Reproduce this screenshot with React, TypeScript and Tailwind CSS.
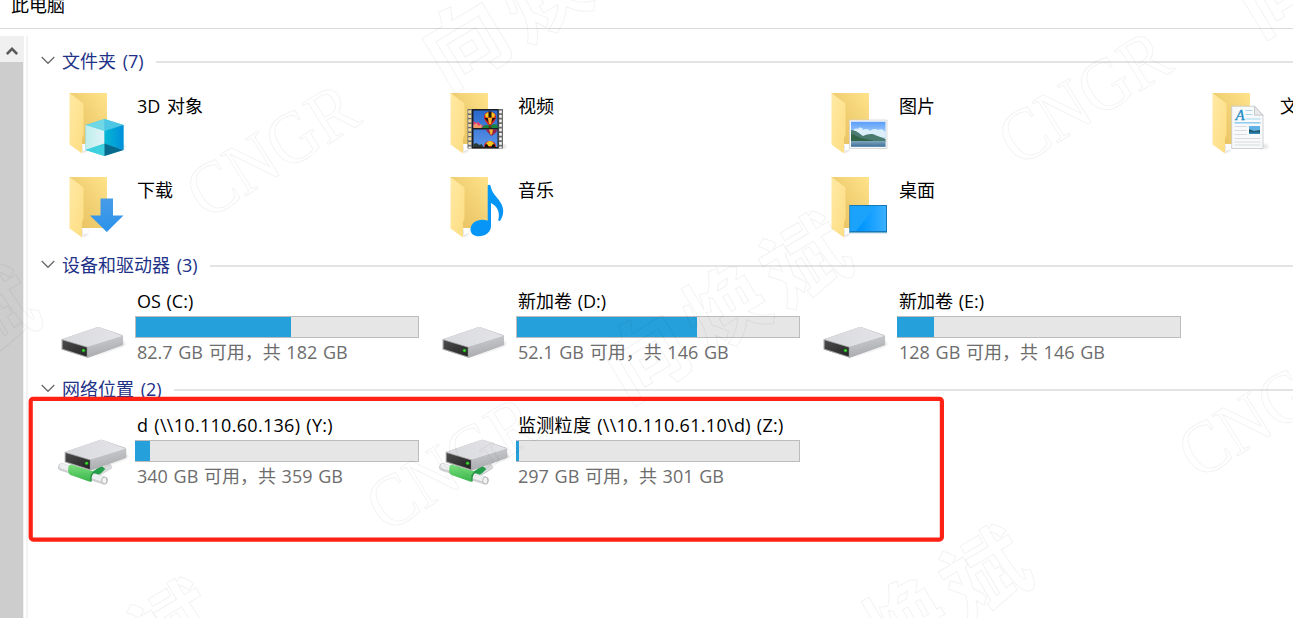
import React from 'react';

interface Drive {
  name: string;
  detail: string;
  used: number;
  network?: boolean;
  flush?: boolean;
}

interface Folder {
  name: string;
  art: React.FC;
  shadow?: boolean;
}

const CubeArt: React.FC = () => (
  <g transform="translate(-1 0)">
    <path d="M41.5 29 22.5 35v25l19 6 19-6V35z" fill="#52c8de" />
    <path d="m41.5 29-19 6 19 6z" fill="#6fd8e4" />
    <path d="m41.5 29 19 6-19 6z" fill="#4cc6e4" />
    <path d="m22.5 35 19 6v12.5l-19 6.5z" fill="url(#cubeLeft)" />
    <path d="m60.5 35-19 6v12.5l19 6.5z" fill="url(#cubeRight)" />
    <path d="m22.5 60 19-6.5V66z" fill="#3dd0de" />
    <path d="m60.5 60-19-6.5V66z" fill="#066a8e" />
  </g>
);

const DownloadArt: React.FC = () => (
  <path d="M36.5 24.5H49v17h10.5L42.8 58 26 41.5h10.5z" fill="url(#arrowBlue)" />
);

const Balloon: React.FC = () => (
  <>
    <path d="M39 27c0-7 12-7 12 0 0 3-3 6-4.5 8h-3C42 33 39 30 39 27" fill="#d81e1e" />
    <path d="M40 25c1.5-4 8.5-4 10 0l-1 2.5h-8z" fill="#f4c71c" />
    <path d="M39.5 28h3l1.5 5zM47.5 28h3L46 33zM43.5 21.5h3v6h-3z" fill="#1b1414" />
    <path d="M43 28h4l-1 6h-2z" fill="#f4b41c" />
    <path d="M43.7 35.5h2.6V38h-2.6z" fill="#5c3310" />
  </>
);

const VideoArt: React.FC = () => (
  <>
    <path d="M22.5 19H58v39.5H22.5z" fill="#6b6b6b" />
    <path d="M27 19h26.5v39.5H27z" fill="#1d1d1f" />
    <path d="M28.5 20.5h24V38h-24zM28.5 39.5h24V57h-24z" fill="url(#sky)" />
    <path d="M28.5 37v-6l3 2 2-1 3 4 2-1 3 3z" fill="#e83872" />
    <path d="m28.5 35 3-2 2 3 3-2v4h-8z" fill="#f09a67" />
    <path d="M37 38c2-4 6-3 8-2 3-2 5-2 7.5-1v3z" fill="#16843c" />
    <Balloon />
    <path d="M41 39.5h11c0 3-3 4-4.5 6h-2C44 43 42 42 41 39.5" fill="#9a1d45" />
    <path d="M44 39.5h4l-1 5h-1.5z" fill="#f0b428" />
    <path d="M28.5 57v-3l3-1 3 2 2-1 2 3z" fill="#2a3a35" />
    <path d="M39 57c0-8 12-8 12 0z" fill="#d81e1e" />
    <path d="M41 54c2-4 6-4 8 0l-2 2h-4z" fill="#f4c71c" />
    <path d="M40 57v-2l2-1 2 3zm6 0 2-3 2 1v2z" fill="#111" />
    <path d="M24.8 20.5V58M55.5 20.5V58" stroke="#f3f3f3" strokeWidth="2.6" strokeDasharray="2.7 1.8" />
    <path d="M24.8 20.5V54" stroke="#f6dc8e" strokeWidth="2.6" strokeDasharray="2.7 1.8" />
  </>
);

const MusicArt: React.FC = () => (
  <path
    d="M42.7 11.5q1.5-1.5 2.8 0c1 6 4 9 8 14 5.5 7 6.5 14 1.5 21.5l-1.8-.5c2-8-.5-14-7.2-17.5V52c0 6.5-6 10.2-12 10.2-5.2 0-8.5-2.7-8.5-6.8 0-6.4 7-10.4 14-9.4q2 .2 3.2.8z"
    fill="url(#noteBlue)"
  />
);

const PictureArt: React.FC = () => (
  <>
    <path d="M23.5 30H61v28.500H23.5z" fill="#f7f7f7" stroke="#cfcfcf" strokeWidth=".7" />
    <path d="M25 31.8h34.5v25H25z" fill="url(#photoSky)" />
    <path d="M27 41c1-3 4-3 5-2 2-3 5-1 5 1 3-2 6-1 7 1 3-3 7-2 8-1 3-2 6 0 7.5 2v5H25z" fill="#dceefa" />
    <path d="M25 40c5 0 9 4 12 6 4-2 9-3 12-1l10.5 4v3H25z" fill="#4b7a70" />
    <path d="M25 44c5 1 8 4 13 4.5L52 52H25z" fill="#326346" />
    <path d="M25 51h34.5v5.8H25z" fill="url(#water)" />
  </>
);

const DesktopArt: React.FC = () => (
  <>
    <path d="M23.3 31H61v28H23.3z" fill="#1778b9" />
    <path d="M24.3 32H60v25H24.3z" fill="url(#screen)" />
    <path d="M24.3 32h26L30 57h-5.7z" fill="#1ba3fb" />
    <path d="M23.3 58.8H61" stroke="#9fc3d6" />
  </>
);

const DocumentArt: React.FC = () => (
  <>
    <path d="M24.7 16.2h22.8l8.5 9v33.3H24.7z" fill="#f8f9fa" stroke="#c3c6c9" strokeWidth=".8" />
    <path d="M47.5 16.2v9H56z" fill="#e6e8ea" stroke="#b8bbbe" strokeWidth=".7" />
    <text x="28.5" y="30" fontSize="15" fontStyle="italic" fontFamily="Liberation Serif, serif" fill="#1b8cc4" stroke="#1b8cc4" strokeWidth=".3">A</text>
    <path d="M38.5 20.5h7M38.5 24.5h7M38.5 29h15" stroke="#a8d6ef" />
    <path d="M27.5 32.8h26" stroke="#8ecbee" strokeWidth="1.5" />
    <path d="M27.5 36.5H40M27.5 40.5H40M27.5 44.5H40M27.5 48.5h26M27.5 52h26M27.5 55h26" stroke="#d9dcde" />
    <path d="M42 36h11v8H42z" fill="#5fb0e5" />
    <path d="m42 39 5 2 6-1v3H42z" fill="#235c72" />
    <path d="M42 42.5h11V44H42z" fill="#3188bd" />
  </>
);

const FOLDERS: Folder[] = [
  { name: '3D 对象', art: CubeArt, shadow: true },
  { name: '视频', art: VideoArt, shadow: true },
  { name: '图片', art: PictureArt, shadow: true },
  { name: '文档', art: DocumentArt, shadow: true },
  { name: '下载', art: DownloadArt },
  { name: '音乐', art: MusicArt },
  { name: '桌面', art: DesktopArt },
];

const DRIVES: Drive[] = [
  { name: 'OS (C:)', detail: '82.7 GB 可用，共 182 GB', used: 155 },
  { name: '新加卷 (D:)', detail: '52.1 GB 可用，共 146 GB', used: 180 },
  { name: '新加卷 (E:)', detail: '128 GB 可用，共 146 GB', used: 37, flush: true },
];

const NETWORK: Drive[] = [
  { name: 'd (\\\\10.110.60.136) (Y:)', detail: '340 GB 可用，共 359 GB', used: 15, network: true, flush: true },
  { name: '监测粒度 (\\\\10.110.61.10\\d) (Z:)', detail: '297 GB 可用，共 301 GB', used: 3, network: true, flush: true },
];

// Gradients shared by every icon on the page
const IconDefs: React.FC = () => (
  <svg className="absolute h-0 w-0" aria-hidden="true">
    <defs>
      <linearGradient id="folderBack" x1="0" y1="1" x2="1" y2="0">
        <stop offset="0" stopColor="#e8c05c" />
        <stop offset=".45" stopColor="#efcd70" />
        <stop offset="1" stopColor="#ffe38b" />
      </linearGradient>
      <linearGradient id="folderFront" x1="0" y1="0" x2="1" y2="1">
        <stop offset="0" stopColor="#ffe9a4" />
        <stop offset="1" stopColor="#fddd82" />
      </linearGradient>
      <linearGradient id="cubeLeft"><stop stopColor="#bfeeec" /><stop offset="1" stopColor="#e0f3f8" /></linearGradient>
      <linearGradient id="cubeRight"><stop stopColor="#06b8d4" /><stop offset="1" stopColor="#008edb" /></linearGradient>
      <linearGradient id="arrowBlue" x2="0" y2="1"><stop stopColor="#489ce8" /><stop offset="1" stopColor="#2b92ea" /></linearGradient>
      <linearGradient id="sky" x2="0" y2="1"><stop stopColor="#2868cc" /><stop offset="1" stopColor="#5b94e8" /></linearGradient>
      <linearGradient id="noteBlue" x2="1" y2="1"><stop stopColor="#009cf8" /><stop offset="1" stopColor="#0a91f5" /></linearGradient>
      <linearGradient id="photoSky" x2="0" y2="1"><stop stopColor="#5a9dfb" /><stop offset=".6" stopColor="#b8dcf8" /></linearGradient>
      <linearGradient id="water" x2="0" y2="1"><stop stopColor="#7fa7be" /><stop offset="1" stopColor="#3e6d99" /></linearGradient>
      <linearGradient id="screen"><stop offset=".3" stopColor="#0096ff" /><stop offset="1" stopColor="#3bb0ff" /></linearGradient>
      <linearGradient id="driveTop" x2="1"><stop stopColor="#d9dadd" /><stop offset="1" stopColor="#e4e4e8" /></linearGradient>
      <linearGradient id="driveSide" x2=".3" y2="1"><stop stopColor="#cfd0d2" /><stop offset="1" stopColor="#a9aaad" /></linearGradient>
      <linearGradient id="driveFront" x2="1" y2="1"><stop stopColor="#4c4c4c" /><stop offset="1" stopColor="#252525" /></linearGradient>
      <linearGradient id="cable" x2="0" y2="1"><stop stopColor="#7be07e" /><stop offset="1" stopColor="#39b44b" /></linearGradient>
      <filter id="soft" x="-30%" y="-60%" width="160%" height="220%"><feGaussianBlur stdDeviation="1" /></filter>
    </defs>
  </svg>
);

const FolderIcon: React.FC<{ folder: Folder }> = ({ folder: { art: Art, shadow } }) => (
  <svg className="h-[70px] w-[66px] shrink-0" viewBox="0 0 66 70">
    <path d="m18 63 5-2 1-6h-6z" fill="#000" opacity=".14" filter="url(#soft)" />
    {shadow && <path d="m52 59 8-.5 2-2-3-2.500h-7z" fill="#000" opacity=".1" filter="url(#soft)" />}
    <path d="M19 53h5v6l-5 2z" fill="#fff" />
    <path d="M5.5 3H43v51H18z" fill="url(#folderBack)" />
    <path d="m5.5 3 14 10.5V45L18 48v15.5l-12.5-9z" fill="url(#folderFront)" />
    <Art />
  </svg>
);

const DriveBody: React.FC = () => (
  <>
    <path d="m33 43.5 33-11 3.5-2.5-3.5-4z" fill="#000" opacity=".12" filter="url(#soft)" />
    <path d="M5.7 25.2 41 13.2q1.3-.4 2.6 0L66 21q1 .4 1 1.3v8.4l-35.3 13-26-8.2z" fill="#b0b1b4" />
    <path d="M5.7 25.2 41 13.2q1.3-.4 2.6 0L67 22 31.7 33z" fill="url(#driveTop)" />
    <path d="M31.7 33 67 22v9L31.7 43.7z" fill="url(#driveSide)" />
    <path d="m5.7 25.2 26 7.8v10.7l-26-8.2z" fill="#a9a9ab" />
    <path d="m6.6 26.2 24.2 7.2v9l-24.2-7.6z" fill="url(#driveFront)" />
    <circle cx="27.5" cy="36.5" r="2" fill="#1d6b1c" />
    <circle cx="27.5" cy="36.5" r="1.2" fill="#3fe236" />
  </>
);

const DriveIcon: React.FC<{ network?: boolean }> = ({ network }) => (
  <svg className="h-[54px] w-[74px] shrink-0" viewBox="0 0 74 54">
    {network && (
      <>
        <path d="m38 38 15-9" stroke="#d9dadb" strokeWidth="6" strokeLinecap="round" />
        <path d="M34 37q7-1 13-8" stroke="#26a04d" strokeWidth="6" fill="none" />
        <path d="m6 29 42 13.5" stroke="#cfd0d1" strokeWidth="8" strokeLinecap="round" />
        <path d="m6 28 42 13.5" stroke="#eeeff0" strokeWidth="5" strokeLinecap="round" />
        <ellipse cx="48.3" cy="42.5" rx="2.6" ry="3.5" fill="#f3f3f3" stroke="#b5b6b7" />
        <path d="m15 26.5 23 7q-4 2-3.5 10.5l-20-7q-3.500-2-2-8.500.5-2 2.500-2" fill="url(#cable)" />
        <path d="M39 34q-5 1.5-4 9.5" stroke="#259344" strokeWidth="1.5" fill="none" />
      </>
    )}
    <g transform={network ? 'translate(3.1 -11.2)' : undefined}>
      <DriveBody />
    </g>
  </svg>
);

const SectionHeader: React.FC<{ title: string }> = ({ title }) => (
  <div className="flex h-6 items-center pl-[13px]">
    <svg className="mr-[7px] mb-[2px] h-3 w-[14px] shrink-0" viewBox="0 0 14 12" fill="none" stroke="#6a6a6a" strokeWidth="1.3">
      <path d="m.7 2 6.3 6.3L13.3 2" />
    </svg>
    <h2 className="mb-[2px] text-[18px] leading-6 whitespace-nowrap text-[#1e3287] [word-spacing:2px]">{title}</h2>
    <div className="ml-3 h-[2px] flex-1 bg-[#e4e4e4]" />
  </div>
);

const DriveTile: React.FC<{ drive: Drive }> = ({ drive }) => (
  <div className="flex h-[100px] gap-[5px] pt-[11px]">
    <div className="pt-[25px]">
      <DriveIcon network={drive.network} />
    </div>
    <div className="w-[284px] whitespace-nowrap [word-spacing:1px]">
      <div className={`pl-[2px] text-[18px] leading-6 text-black ${drive.network ? 'tracking-[0.3px]' : ''}`}>{drive.name}</div>
      <div className={`mt-[3px] h-[22px] border border-[#bcbcbc] bg-[#e6e6e6] ${drive.flush ? 'border-l-0' : ''}`}>
        <div className="h-full bg-[#26a0da]" style={{ width: drive.used }} />
      </div>
      <div className="mt-[2px] pl-[2px] text-[18px] leading-6 text-[#6d6d6d]">{drive.detail}</div>
    </div>
  </div>
);

// Faint outlined stamps repeated on a slanted lattice
const Watermark: React.FC = () => {
  const stamps = [[274, 150], [1086, 97], [454, 463], [1266, 410]];
  const names = [[724, 309], [544, -4], [904, 622], [-88, 362], [92, 675], [1356, -57]];

  return (
    <svg className="pointer-events-none absolute inset-0 h-full w-full" fill="none" stroke="#000" strokeOpacity=".055">
      {stamps.map(([x, y]) => (
        <text key={x} transform={`translate(${x} ${y}) rotate(-32)`} x="-95" y="24" fontSize="74" textLength="186" lengthAdjust="spacingAndGlyphs" fontFamily="Liberation Serif, serif">CNGR</text>
      ))}
      {names.map(([x, y]) => (
        <text key={x} transform={`translate(${x} ${y}) rotate(-31)`} x="6" y="31" textAnchor="middle" fontSize="84" fontWeight="700" letterSpacing="9" fontFamily="Noto Sans CJK SC, sans-serif">向焕斌</text>
      ))}
    </svg>
  );
};

export default function App() {
  return (
    <div className="relative flex h-[618px] w-full flex-col overflow-hidden bg-white font-['Open_Sans','Noto_Sans_CJK_SC',sans-serif]">
      <IconDefs />
      <header className="flex h-[29px] shrink-0 items-start border-b border-[#d9d9d9] pl-[11px]">
        <h1 className="-mt-[7px] text-[18px] leading-6 text-black">此电脑</h1>
      </header>

      <div className="flex min-h-0 flex-1">
        <div className="mt-[7px] flex w-6 shrink-0 flex-col bg-[#f0f0f0]">
          <div className="flex h-[26px] items-center justify-center pt-1">
            <svg className="h-3 w-3" viewBox="0 0 12 12" fill="none" stroke="#5a5a5a" strokeWidth="2.6">
              <path d="M.8 9 6 3.8 11.2 9" />
            </svg>
          </div>
          <div className="mr-px flex-1 bg-[#cdcdcd]" />
        </div>
        <div className="mt-[7px] ml-[2px] w-[2px] shrink-0 bg-[#f3f3f3]" />

        <main className="min-w-0 flex-1 overflow-hidden pt-[21px]">
          <SectionHeader title="文件夹 (7)" />
          <div className="grid w-[1600px] grid-cols-[repeat(4,381px)] pt-3 pl-9">
            {FOLDERS.map((folder) => (
              <div key={folder.name} className="flex h-[84px] gap-[7px] pt-1">
                <FolderIcon folder={folder} />
                <span className="pt-1 text-[18px] leading-6 whitespace-nowrap text-black [word-spacing:2px]">{folder.name}</span>
              </div>
            ))}
          </div>

          <SectionHeader title="设备和驱动器 (3)" />
          <div className="grid grid-cols-[repeat(3,381px)] pl-7">
            {DRIVES.map((drive) => <DriveTile key={drive.name} drive={drive} />)}
          </div>

          <SectionHeader title="网络位置 (2)" />
          <div className="grid grid-cols-[repeat(3,381px)] pl-7">
            {NETWORK.map((drive) => <DriveTile key={drive.name} drive={drive} />)}
          </div>
        </main>
      </div>

      <Watermark />

      {/* Highlight around the network drives */}
      <svg className="pointer-events-none absolute inset-0 h-full w-full" fill="none">
        <rect x="30.7" y="398.8" width="911.2" height="140.8" rx="2.5" stroke="#ff2113" strokeWidth="4.2" />
      </svg>
    </div>
  );
}
